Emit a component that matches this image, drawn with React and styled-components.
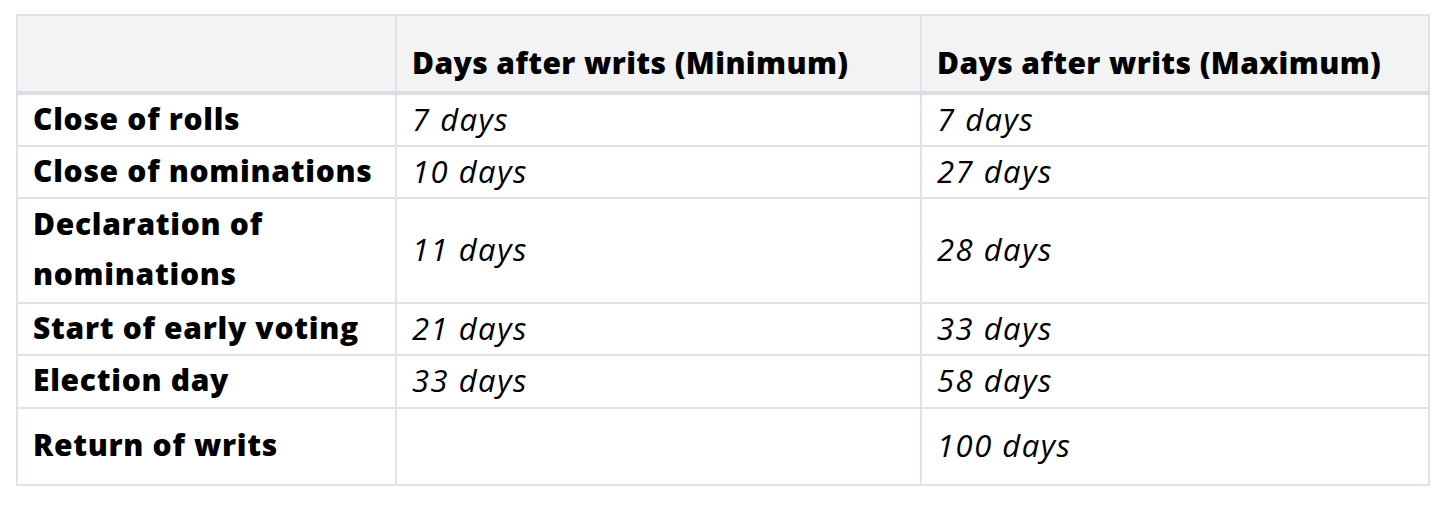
import React from 'react';
import styled, { createGlobalStyle } from 'styled-components';

const GlobalStyle = createGlobalStyle`
  html, body {
    margin: 0;
    padding: 0;
    background: #ffffff;
  }
  body {
    font-family: "Open Sans", "Liberation Sans", sans-serif;
    color: #000000;
  }
`;

const Page = styled.div`
  padding: 14px 0 0 16px;
`;

const Table = styled.table`
  border-collapse: collapse;
  table-layout: fixed;
  width: 1412px;
  border: 2px solid #dfe3e8;
`;

const HeadRow = styled.tr`
  height: 78px;
`;

const HeadCell = styled.th`
  padding: 0 15px 10px;
  background: #f3f3f3;
  border-left: 2px solid #dfe3e8;
  border-bottom: 4px solid #d9dee4;
  font-size: 30px;
  font-weight: 800;
  line-height: 36px;
  text-align: left;
  vertical-align: bottom;
  letter-spacing: 0.4px;
  white-space: nowrap;
`;

const Row = styled.tr`
  height: ${(p) => p.$h}px;
`;

const LabelCell = styled.td`
  padding: 0 15px 3px;
  border: 2px solid #dfe3e8;
  font-size: 30px;
  font-weight: 800;
  line-height: ${(p) => (p.$tall ? 50 : 46)}px;
  vertical-align: middle;
  letter-spacing: 0.7px;
  white-space: nowrap;
`;

const ValueCell = styled.td`
  padding: 0 15px 3px;
  border: 2px solid #dfe3e8;
  font-size: 31px;
  font-style: italic;
  line-height: 40px;
  vertical-align: middle;
  letter-spacing: 1.5px;
`;

const rows = [
  { label: 'Close of rolls', min: '7 days', max: '7 days', h: 53 },
  { label: 'Close of nominations', min: '10 days', max: '27 days', h: 52 },
  { label: 'Declaration of nominations', min: '11 days', max: '28 days', h: 104 },
  { label: 'Start of early voting', min: '21 days', max: '33 days', h: 52 },
  { label: 'Election day', min: '33 days', max: '58 days', h: 53 },
  { label: 'Return of writs', min: '', max: '100 days', h: 77 },
];

export default function App() {
  return (
    <>
      <GlobalStyle />
      <Page>
        <Table>
          <colgroup>
            <col style={{ width: 379 }} />
            <col style={{ width: 525 }} />
            <col style={{ width: 508 }} />
          </colgroup>
          <thead>
            <HeadRow>
              <HeadCell />
              <HeadCell>Days after writs (Minimum)</HeadCell>
              <HeadCell>Days after writs (Maximum)</HeadCell>
            </HeadRow>
          </thead>
          <tbody>
            {rows.map((r) => {
              const tall = r.label === 'Declaration of nominations';
              return (
                <Row key={r.label} $h={r.h}>
                  <LabelCell $tall={tall}>
                    {tall ? <>Declaration of<br />nominations</> : r.label}
                  </LabelCell>
                  <ValueCell>{r.min}</ValueCell>
                  <ValueCell>{r.max}</ValueCell>
                </Row>
              );
            })}
          </tbody>
        </Table>
      </Page>
    </>
  );
}
